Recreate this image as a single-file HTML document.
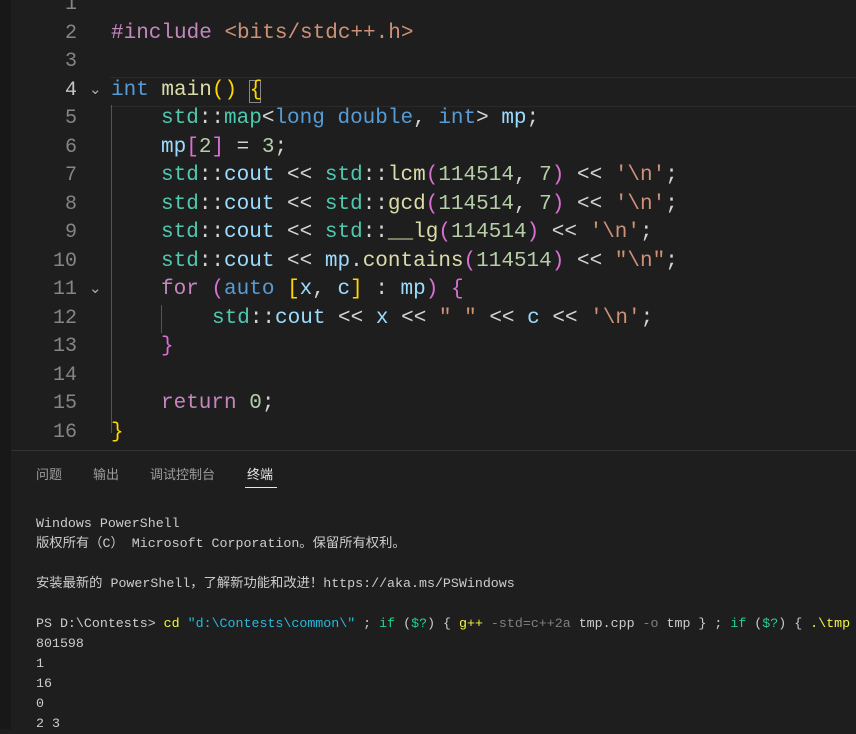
<!DOCTYPE html><html><head><meta charset="utf-8"><style>
body{margin:0;width:856px;height:729px;background:#1e1e1e;overflow:hidden;position:relative;font-family:"Liberation Mono","Noto Sans CJK SC",monospace}
.side{position:absolute;left:0;top:0;width:11px;height:729px;background:#181818}
.code{position:absolute;left:0;top:0;font-size:21px}
.l{position:absolute;height:28.5px;line-height:28.5px;white-space:pre;color:#d4d4d4}
.n{position:absolute;width:77px;text-align:right;color:#858585;font-size:20px;height:28.5px;line-height:28.5px}
.k{color:#569cd6}.f{color:#dcdcaa}.t{color:#4ec9b0}.v{color:#9cdcfe}.d{color:#b5cea8}.s{color:#ce9178}.p{color:#c586c0}.y{color:#ffd700}.m{color:#da70d6}
.term{position:absolute;left:36px;font-size:13.3px;color:#cccccc;white-space:pre;line-height:20px}
</style></head><body>
<div class="side"></div>
<div style="position:absolute;left:110px;top:77px;width:746px;height:28px;border:1px solid #2a2a2a;border-left:none"></div>
<div style="position:absolute;left:111px;top:105px;width:1px;height:328px;background:#555"></div>
<div style="position:absolute;left:161px;top:305px;width:1px;height:28px;background:#555"></div>
<div style="position:absolute;left:249px;top:80px;width:12px;height:23px;border:1px solid #888;box-sizing:border-box"></div>
<div class="code">
<div class="n" style="top:-9px">1</div>
<div class="n" style="top:20px">2</div><div class="l" style="left:111px;top:20px"><span class="p">#include</span> <span class="s">&lt;bits/stdc++.h&gt;</span></div>
<div class="n" style="top:48px">3</div>
<div class="n" style="top:77px;color:#c6c6c6">4</div><div class="l" style="left:89px;top:77px;color:#aaa;font-size:15px">⌄</div><div class="l" style="left:111px;top:77px"><span class="k">int</span> <span class="f">main</span><span class="y">()</span> <span class="y">{</span></div>
<div class="n" style="top:105px">5</div><div class="l" style="left:161px;top:105px"><span class="t">std</span>::<span class="t">map</span>&lt;<span class="k">long double</span>, <span class="k">int</span>&gt; <span class="v">mp</span>;</div>
<div class="n" style="top:134px">6</div><div class="l" style="left:161px;top:134px"><span class="v">mp</span><span class="m">[</span><span class="d">2</span><span class="m">]</span> = <span class="d">3</span>;</div>
<div class="n" style="top:162px">7</div><div class="l" style="left:161px;top:162px"><span class="t">std</span>::<span class="v">cout</span> &lt;&lt; <span class="t">std</span>::<span class="f">lcm</span><span class="m">(</span><span class="d">114514</span>, <span class="d">7</span><span class="m">)</span> &lt;&lt; <span class="s">'\n'</span>;</div>
<div class="n" style="top:191px">8</div><div class="l" style="left:161px;top:191px"><span class="t">std</span>::<span class="v">cout</span> &lt;&lt; <span class="t">std</span>::<span class="f">gcd</span><span class="m">(</span><span class="d">114514</span>, <span class="d">7</span><span class="m">)</span> &lt;&lt; <span class="s">'\n'</span>;</div>
<div class="n" style="top:219px">9</div><div class="l" style="left:161px;top:219px"><span class="t">std</span>::<span class="v">cout</span> &lt;&lt; <span class="t">std</span>::<span class="f">__lg</span><span class="m">(</span><span class="d">114514</span><span class="m">)</span> &lt;&lt; <span class="s">'\n'</span>;</div>
<div class="n" style="top:248px">10</div><div class="l" style="left:161px;top:248px"><span class="t">std</span>::<span class="v">cout</span> &lt;&lt; <span class="v">mp</span>.<span class="f">contains</span><span class="m">(</span><span class="d">114514</span><span class="m">)</span> &lt;&lt; <span class="s">"\n"</span>;</div>
<div class="n" style="top:276px">11</div><div class="l" style="left:89px;top:276px;color:#aaa;font-size:15px">⌄</div><div class="l" style="left:161px;top:276px"><span class="p">for</span> <span class="m">(</span><span class="k">auto</span> <span class="y">[</span><span class="v">x</span>, <span class="v">c</span><span class="y">]</span> : <span class="v">mp</span><span class="m">)</span> <span class="m">{</span></div>
<div class="n" style="top:305px">12</div><div class="l" style="left:212px;top:305px"><span class="t">std</span>::<span class="v">cout</span> &lt;&lt; <span class="v">x</span> &lt;&lt; <span class="s">" "</span> &lt;&lt; <span class="v">c</span> &lt;&lt; <span class="s">'\n'</span>;</div>
<div class="n" style="top:333px">13</div><div class="l" style="left:161px;top:333px"><span class="m">}</span></div>
<div class="n" style="top:362px">14</div>
<div class="n" style="top:390px">15</div><div class="l" style="left:161px;top:390px"><span class="p">return</span> <span class="d">0</span>;</div>
<div class="n" style="top:419px">16</div><div class="l" style="left:111px;top:419px"><span class="y">}</span></div>
</div>
<div style="position:absolute;left:11px;top:450px;width:845px;height:279px;background:#1e1e1e;border-top:1px solid #333"></div>
<div style="position:absolute;top:464px;left:36px;font-family:'Noto Sans CJK SC',sans-serif;font-size:13px;color:#9d9d9d;white-space:pre"><span>问题</span><span style="position:absolute;left:57px">输出</span><span style="position:absolute;left:114px">调试控制台</span><span style="position:absolute;left:211px;color:#e7e7e7">终端</span></div>
<div style="position:absolute;left:245px;top:487px;width:32px;height:1px;background:#e7e7e7"></div>
<div class="term" style="top:514px">Windows PowerShell
版权所有（C） Microsoft Corporation。保留所有权利。

安装最新的 PowerShell，了解新功能和改进！https://aka.ms/PSWindows

PS D:\Contests&gt; <span style="color:#f5f543">cd</span> <span style="color:#29b8db">"d:\Contests\common\"</span> ; <span style="color:#23d18b">if</span> (<span style="color:#23d18b">$?</span>) { <span style="color:#f5f543">g++</span> <span style="color:#808080">-std=c++2a</span> tmp.cpp <span style="color:#808080">-o</span> tmp } ; <span style="color:#23d18b">if</span> (<span style="color:#23d18b">$?</span>) { <span style="color:#f5f543">.\tmp</span>
801598
1
16
0
2 3</div>
</body></html>
